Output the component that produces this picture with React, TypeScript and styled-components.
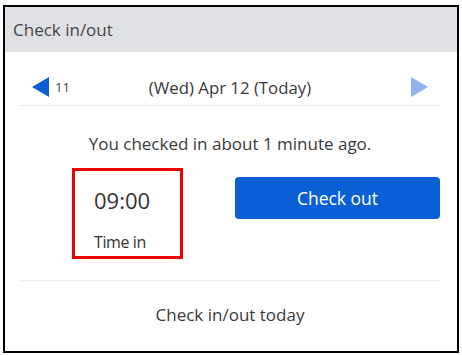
import React from "react";
import styled, { createGlobalStyle } from "styled-components";

const Global = createGlobalStyle`
  html, body { margin: 0; padding: 0; background: #ffffff; }
  body { font-family: "Open Sans", Lato, "Noto Sans", sans-serif; color: #3a3a3a; }
`;

const Frame = styled.div`
  box-sizing: border-box;
  margin: 5px 0 0 3px;
  width: 456px;
  height: 348px;
  border: 2px solid #000;
  background: #fff;
  display: flex;
  flex-direction: column;
`;

const Header = styled.div`
  height: 45px;
  background: #e0e1e4;
  display: flex;
  align-items: center;
  padding-left: 8px;
  font-size: 17px;
  color: #464646;
`;

const Body = styled.div`
  padding: 0 17px 0 15px;
  display: flex;
  flex-direction: column;
`;

const NavRow = styled.div`
  display: grid;
  grid-template-columns: 1fr auto 1fr;
  align-items: center;
  height: 36px;
  padding: 17px 12px 0 12px;
  border-bottom: 1px solid #ececec;
`;

const NavSide = styled.div<{ $end?: boolean }>`
  display: flex;
  align-items: center;
  gap: 6px;
  justify-content: ${(p) => (p.$end ? "flex-end" : "flex-start")};
`;

const PrevLabel = styled.span`
  font-size: 13px;
  color: #3a3a3a;
`;

const DateLabel = styled.div`
  font-size: 16.8px;
  color: #3a3a3a;
`;

const Message = styled.div`
  padding-top: 28px;
  line-height: 20px;
  font-size: 17px;
  text-align: center;
`;

const ActionRow = styled.div`
  display: grid;
  grid-template-columns: 1fr 205px;
  align-items: start;
  margin-top: 14px;
  padding-bottom: 21px;
  border-bottom: 1px solid #efefef;
`;

const TimeCell = styled.div`
  display: flex;
  justify-content: center;
`;

const TimeBox = styled.div`
  box-sizing: border-box;
  width: 111px;
  height: 91px;
  border: 3px solid #f00000;
  padding: 16px 0 0 19px;
  display: flex;
  flex-direction: column;
`;

const TimeValue = styled.div`
  font-size: 22px;
  line-height: 26px;
  color: #333;
`;

const TimeLabel = styled.div`
  margin-top: 18px;
  font-size: 16px;
  letter-spacing: -0.4px;
  line-height: 22px;
  color: #333;
`;

const CheckButton = styled.button`
  margin-top: 9px;
  height: 42px;
  border: none;
  border-radius: 4px;
  background: #0b5fd4;
  color: #fff;
  font-family: inherit;
  font-size: 17.5px;
  cursor: pointer;
`;

const TodayLink = styled.div`
  padding-top: 24px;
  line-height: 20px;
  font-size: 17px;
  text-align: center;
`;

const Triangle = ({ dir, color }: { dir: "left" | "right"; color: string }) => (
  <svg width="17" height="20" viewBox="0 0 17 20">
    <polygon points={dir === "left" ? "17,0 17,20 0,10" : "0,0 0,20 17,10"} fill={color} />
  </svg>
);

export default function App() {
  return (
    <>
      <Global />
      <Frame>
        <Header>Check in/out</Header>
        <Body>
          <NavRow>
            <NavSide>
              <Triangle dir="left" color="#0b5fd4" />
              <PrevLabel>11</PrevLabel>
            </NavSide>
            <DateLabel>(Wed) Apr 12 (Today)</DateLabel>
            <NavSide $end>
              <Triangle dir="right" color="#8db4ed" />
            </NavSide>
          </NavRow>
          <Message>You checked in about 1 minute ago.</Message>
          <ActionRow>
            <TimeCell>
              <TimeBox>
                <TimeValue>09:00</TimeValue>
                <TimeLabel>Time in</TimeLabel>
              </TimeBox>
            </TimeCell>
            <CheckButton>Check out</CheckButton>
          </ActionRow>
          <TodayLink>Check in/out today</TodayLink>
        </Body>
      </Frame>
    </>
  );
}
